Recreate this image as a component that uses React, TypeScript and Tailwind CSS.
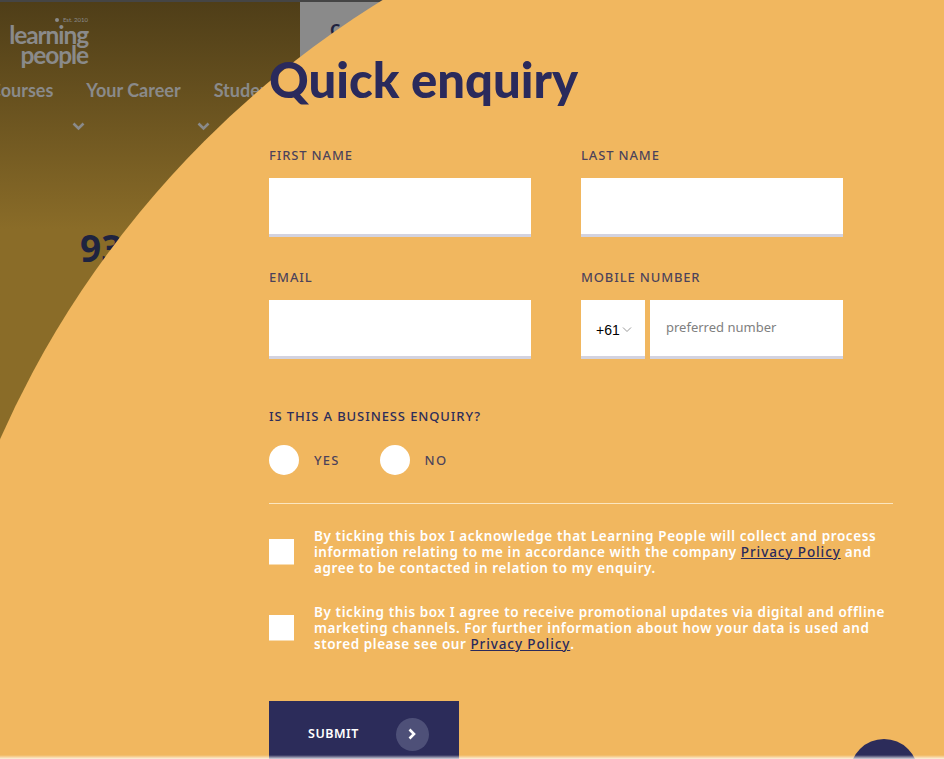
import React from 'react';

const FONT = "font-['Noto_Sans','Open_Sans',sans-serif]";
const LABEL = 'h-[22px] text-[13px] leading-[22px] font-medium tracking-[0.85px] text-[#2d2d5a]/85';

function Field({ label }: { label: string }) {
  return (
    <div className="flex w-[262px] flex-col">
      <div className={LABEL}>{label}</div>
      <div className="mt-[12px] h-[59px] border-b-[3px] border-[#d3d3e0] bg-white" />
    </div>
  );
}

function Radio({ label }: { label: string }) {
  return (
    <div className="flex items-center gap-[15px]">
      <div className="h-[30px] w-[30px] rounded-full bg-white" />
      <span className="pt-[2px] text-[13px] font-medium tracking-[1.2px] text-[#2d2d5a]/85">{label}</span>
    </div>
  );
}

function Consent({ children }: { children: React.ReactNode }) {
  return (
    <div className="flex items-center gap-[20px]">
      <div className="h-[26px] w-[25px] shrink-0 border-b border-[#f8dcb0] bg-white" />
      <p className="text-[13.5px] leading-[16px] font-semibold tracking-[0.59px] whitespace-pre text-white">{children}</p>
    </div>
  );
}

export default function App() {
  return (
    <div className={`relative h-[759px] w-[944px] overflow-hidden bg-[#f1b75f] ${FONT}`}>
      {/* Dimmed page behind the modal */}
      <div className="absolute inset-0 border-t-2 border-[#454545] bg-gradient-to-b from-[#4f3e18] to-[#8a6c28] to-[30%]">
        <div className="absolute top-0 left-[300px] h-[120px] w-[200px] bg-[#8a8a8a] pt-[16px] pl-[30px] text-[16px] font-bold text-[#1e2340]">C</div>
        <div className="absolute top-[14px] left-[8px] flex w-[80px] flex-col items-end font-['Lato',sans-serif] leading-[20px] font-bold tracking-[-1.1px] text-[#8a8a8a]">
          <span className="flex h-[8px] items-center gap-[4px] text-[6px] leading-[8px] font-normal tracking-normal">
            <span className="h-[4px] w-[4px] rounded-full bg-[#8a8a8a]" />
            Est. 2010
          </span>
          <span className="mt-[1px] text-[24.5px]">learning</span>
          <span className="text-[24.5px]">people</span>
        </div>
        <div className="absolute top-[77px] left-[-11px] flex gap-[33px] font-['Lato',sans-serif] text-[18px] leading-[22px] font-bold whitespace-nowrap text-[#8a8a8a]">
          <span>Courses</span>
          <span>Your Career</span>
          <span>Students</span>
        </div>
        <svg className="absolute top-[120px] left-[72px]" width="13" height="9" viewBox="0 0 13 9" fill="none" stroke="#8a8a8a" strokeWidth="2.6"><path d="M1.5 1.5 6.5 6.5 11.5 1.5" /></svg>
        <svg className="absolute top-[120px] left-[197px]" width="13" height="9" viewBox="0 0 13 9" fill="none" stroke="#8a8a8a" strokeWidth="2.6"><path d="M1.5 1.5 6.5 6.5 11.5 1.5" /></svg>
        <div className="absolute top-[222px] left-[80px] text-[37px] leading-[48px] font-bold text-[#1e2340]">93</div>
      </div>

      {/* Modal circle */}
      <div className="absolute top-[-147px] left-[-84px] h-[1968px] w-[1968px] rounded-full bg-[#f1b75f]" />

      {/* Form */}
      <div className="absolute inset-0 flex flex-col pt-[49px] pl-[269px]">
        <h1 className="font-['Lato',sans-serif] text-[49px] leading-[60px] font-black text-[#2a2a5c]">Quick enquiry</h1>
        <div className="mt-[35px] flex gap-[50px]">
          <Field label="FIRST NAME" />
          <Field label="LAST NAME" />
        </div>
        <div className="mt-[29px] flex gap-[50px]">
          <Field label="EMAIL" />
          <div className="flex w-[262px] flex-col">
            <div className={LABEL}>MOBILE NUMBER</div>
            <div className="mt-[12px] flex gap-[5px]">
              <div className="flex h-[59px] w-[64px] items-center gap-[2px] border-b-[3px] border-[#d3d3e0] bg-white pt-[4px] pl-[15px] font-['Liberation_Sans',sans-serif] text-[14px] text-black">
                +61
                <svg width="10" height="6" viewBox="0 0 10 6" fill="none" stroke="#999" strokeWidth="1"><path d="M1 .5 5 4.5 9 .5" /></svg>
              </div>
              <div className="flex h-[59px] w-[193px] items-center border-b-[3px] border-[#d3d3e0] bg-white pl-[16px] text-[13px] text-[#808080]">preferred number</div>
            </div>
          </div>
        </div>
        <div className="mt-[46px] h-[22px] text-[13px] leading-[22px] font-medium tracking-[0.9px] text-[#2d2d5a]">IS THIS A BUSINESS ENQUIRY?</div>
        <div className="mt-[18px] flex gap-[40px]">
          <Radio label="YES" />
          <Radio label="NO" />
        </div>
        <div className="mt-[28px] h-px w-[624px] shrink-0 bg-[#fbe6c0]" />
        <div className="mt-[24px] flex flex-col gap-[28px]">
          <Consent>
            {'By ticking this box I acknowledge that Learning People will collect and process\n'}
            <span className="tracking-[0.54px]">information relating to me in accordance with the company </span>
            <a className="font-medium tracking-[0.9px] text-[#2a2a5c] underline">Privacy Policy</a>
            {' and\nagree to be contacted in relation to my enquiry.'}
          </Consent>
          <Consent>
            {'By ticking this box I agree to receive promotional updates via digital and offline\nmarketing channels. For further information about how your data is used and\n'}
            <span className="tracking-[0.55px]">stored please see our </span>
            <a className="font-medium tracking-[0.9px] text-[#2a2a5c] underline">Privacy Policy</a>
            {'.'}
          </Consent>
        </div>
        <div className="mt-[49px] flex h-[66px] w-[190px] shrink-0 items-center justify-between bg-[#2c2c5a] pr-[30px] pl-[39px]">
          <span className="text-[12.5px] font-semibold tracking-[0.5px] text-white">SUBMIT</span>
          <span className="flex h-[33px] w-[33px] items-center justify-center rounded-full bg-[#4e5078]">
            <svg className="-ml-[2px]" width="10" height="12" viewBox="0 0 10 12" fill="none" stroke="#fff" strokeWidth="2.6"><path d="M2.5 1.5 7 6 2.5 10.5" /></svg>
          </span>
        </div>
      </div>

      {/* Chat bubble */}
      <div className="absolute top-[739px] left-[850px] h-[68px] w-[68px] rounded-full bg-[#2c2c5a]" />
      {/* Bottom fade */}
      <div className="absolute right-0 bottom-0 left-0 h-[4px] bg-gradient-to-b from-transparent to-white/80" />
    </div>
  );
}
